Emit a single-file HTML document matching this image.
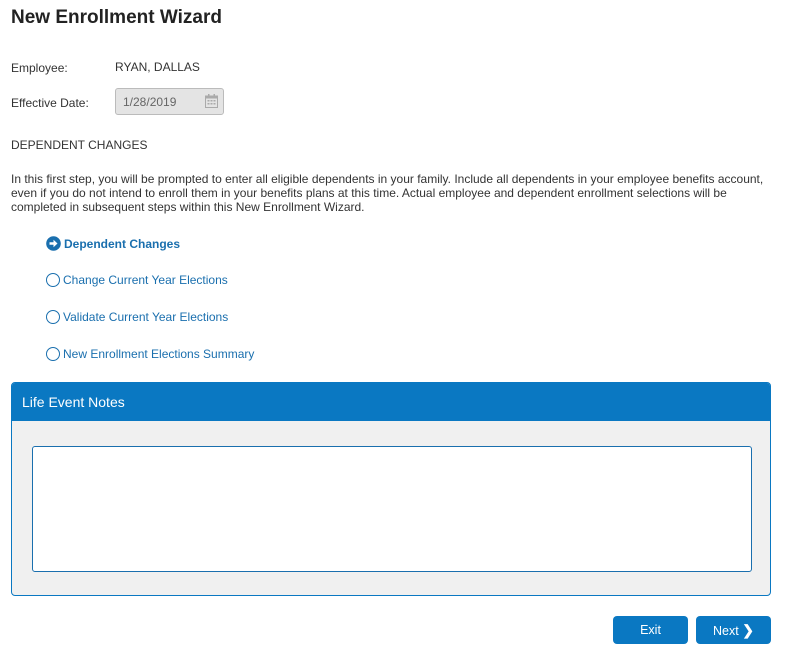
<!DOCTYPE html>
<html><head><style>
body{margin:0;background:#fff;font-family:"Liberation Sans",sans-serif;font-size:12px;color:#333;width:785px;height:652px;position:relative;overflow:hidden}
.a{position:absolute;white-space:nowrap}
h1{position:absolute;left:11px;top:7px;margin:0;font-size:19px;font-weight:bold;color:#222}
.step{position:absolute;left:46px;color:#1a6fae;font-size:12px}
.step span.c{display:inline-block;width:12px;height:12px;border:1.5px solid #1a6fae;border-radius:50%;vertical-align:-3px;margin-right:3px}
.btn{position:absolute;top:616px;width:75px;height:28px;background:#0a78c2;border-radius:4px;color:#fff;font-size:12.5px;text-align:center;line-height:29px}
</style></head><body>
<h1>New Enrollment Wizard</h1>
<div class="a" style="left:11px;top:61px">Employee:</div>
<div class="a" style="left:115px;top:60px">RYAN, DALLAS</div>
<div class="a" style="left:11px;top:96px">Effective Date:</div>
<div class="a" style="left:115px;top:88px;width:109px;height:27px;background:#e4e4e4;border:1px solid #bbb;border-radius:3px;box-sizing:border-box;">
<span style="position:absolute;left:7px;top:6px;color:#666">1/28/2019</span>
<svg style="position:absolute;left:89px;top:5px" width="13" height="14" viewBox="0 0 13 14"><rect x="0.5" y="2" width="12" height="11.5" fill="none" stroke="#aaa"/><rect x="0.5" y="2" width="12" height="2.5" fill="#aaa"/><rect x="3" y="0" width="1.5" height="3" fill="#aaa"/><rect x="8.5" y="0" width="1.5" height="3" fill="#aaa"/><g fill="#aaa"><rect x="2.5" y="6" width="2" height="1.5"/><rect x="5.5" y="6" width="2" height="1.5"/><rect x="8.5" y="6" width="2" height="1.5"/><rect x="2.5" y="9" width="2" height="1.5"/><rect x="5.5" y="9" width="2" height="1.5"/><rect x="8.5" y="9" width="2" height="1.5"/></g></svg></div>
<div class="a" style="left:11px;top:138px">DEPENDENT CHANGES</div>
<div class="a" style="left:11px;top:172px;line-height:14px;white-space:normal;width:770px">In this first step, you will be prompted to enter all eligible dependents in your family. Include all dependents in your employee benefits account, even if you do not intend to enroll them in your benefits plans at this time. Actual employee and dependent enrollment selections will be completed in subsequent steps within this New Enrollment Wizard.</div>
<div class="step" style="top:236px;font-weight:bold"><svg width="15" height="15" viewBox="0 0 15 15" style="vertical-align:-3px;margin-right:3px"><circle cx="7.5" cy="7.5" r="7.3" fill="#1a6fae"/><path d="M3.5 6.3h4V3.8l4 3.7-4 3.7V8.7h-4z" fill="#fff"/></svg>Dependent Changes</div>
<div class="step" style="top:273px"><span class="c"></span>Change Current Year Elections</div>
<div class="step" style="top:310px"><span class="c"></span>Validate Current Year Elections</div>
<div class="step" style="top:347px"><span class="c"></span>New Enrollment Elections Summary</div>
<div class="a" style="left:11px;top:382px;width:760px;height:214px;border:1px solid #0a78c2;border-radius:4px;box-sizing:border-box;background:#f0f0f0;overflow:hidden">
<div style="height:38px;background:#0a78c2;color:#fff;font-size:14px;line-height:38px;padding-left:10px">Life Event Notes</div>
<div style="position:absolute;left:20px;top:63px;width:720px;height:126px;background:#fff;border:1px solid #1a6fae;border-radius:3px;box-sizing:border-box"></div>
</div>
<div class="btn" style="left:613px">Exit</div>
<div class="btn" style="left:696px">Next <b style="font-size:14px">&#x276F;</b></div>
</body></html>
